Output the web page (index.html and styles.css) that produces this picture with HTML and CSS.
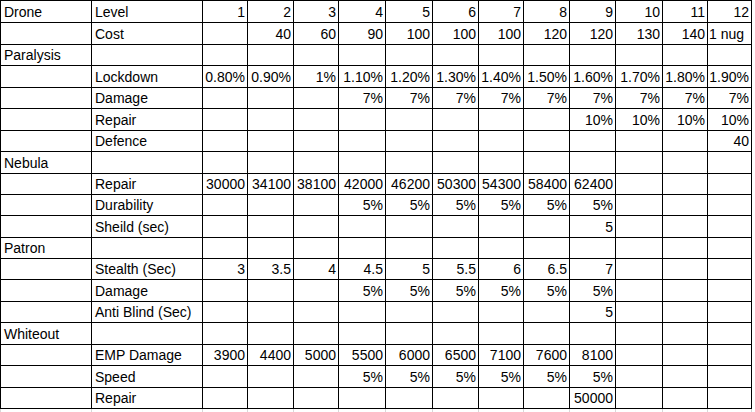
FILE: index.html
```html
<!DOCTYPE html>
<html>
<head>
<meta charset="utf-8">
<link rel="stylesheet" href="styles.css">
</head>
<body>
<div class="sheet">
  <div class="row h22"><div class="c">Drone</div><div class="c">Level</div><div class="c n">1</div><div class="c n">2</div><div class="c n">3</div><div class="c n">4</div><div class="c n">5</div><div class="c n">6</div><div class="c n">7</div><div class="c n">8</div><div class="c n">9</div><div class="c n">10</div><div class="c n">11</div><div class="c n">12</div></div>
  <div class="row h22"><div class="c"></div><div class="c">Cost</div><div class="c n"></div><div class="c n">40</div><div class="c n">60</div><div class="c n">90</div><div class="c n">100</div><div class="c n">100</div><div class="c n">100</div><div class="c n">120</div><div class="c n">120</div><div class="c n">130</div><div class="c n">140</div><div class="c l">1 nug</div></div>
  <div class="row h21"><div class="c">Paralysis</div><div class="c"></div><div class="c"></div><div class="c"></div><div class="c"></div><div class="c"></div><div class="c"></div><div class="c"></div><div class="c"></div><div class="c"></div><div class="c"></div><div class="c"></div><div class="c"></div><div class="c"></div></div>
  <div class="row h22"><div class="c"></div><div class="c">Lockdown</div><div class="c n">0.80%</div><div class="c n">0.90%</div><div class="c n">1%</div><div class="c n">1.10%</div><div class="c n">1.20%</div><div class="c n">1.30%</div><div class="c n">1.40%</div><div class="c n">1.50%</div><div class="c n">1.60%</div><div class="c n">1.70%</div><div class="c n">1.80%</div><div class="c n">1.90%</div></div>
  <div class="row h21"><div class="c"></div><div class="c">Damage</div><div class="c n"></div><div class="c n"></div><div class="c n"></div><div class="c n">7%</div><div class="c n">7%</div><div class="c n">7%</div><div class="c n">7%</div><div class="c n">7%</div><div class="c n">7%</div><div class="c n">7%</div><div class="c n">7%</div><div class="c n">7%</div></div>
  <div class="row h22"><div class="c"></div><div class="c">Repair</div><div class="c n"></div><div class="c n"></div><div class="c n"></div><div class="c n"></div><div class="c n"></div><div class="c n"></div><div class="c n"></div><div class="c n"></div><div class="c n">10%</div><div class="c n">10%</div><div class="c n">10%</div><div class="c n">10%</div></div>
  <div class="row h21"><div class="c"></div><div class="c">Defence</div><div class="c n"></div><div class="c n"></div><div class="c n"></div><div class="c n"></div><div class="c n"></div><div class="c n"></div><div class="c n"></div><div class="c n"></div><div class="c n"></div><div class="c n"></div><div class="c n"></div><div class="c n">40</div></div>
  <div class="row h22"><div class="c">Nebula</div><div class="c"></div><div class="c"></div><div class="c"></div><div class="c"></div><div class="c"></div><div class="c"></div><div class="c"></div><div class="c"></div><div class="c"></div><div class="c"></div><div class="c"></div><div class="c"></div><div class="c"></div></div>
  <div class="row h21"><div class="c"></div><div class="c">Repair</div><div class="c n">30000</div><div class="c n">34100</div><div class="c n">38100</div><div class="c n">42000</div><div class="c n">46200</div><div class="c n">50300</div><div class="c n">54300</div><div class="c n">58400</div><div class="c n">62400</div><div class="c n"></div><div class="c n"></div><div class="c n"></div></div>
  <div class="row h21"><div class="c"></div><div class="c">Durability</div><div class="c n"></div><div class="c n"></div><div class="c n"></div><div class="c n">5%</div><div class="c n">5%</div><div class="c n">5%</div><div class="c n">5%</div><div class="c n">5%</div><div class="c n">5%</div><div class="c n"></div><div class="c n"></div><div class="c n"></div></div>
  <div class="row h22"><div class="c"></div><div class="c">Sheild (sec)</div><div class="c n"></div><div class="c n"></div><div class="c n"></div><div class="c n"></div><div class="c n"></div><div class="c n"></div><div class="c n"></div><div class="c n"></div><div class="c n">5</div><div class="c n"></div><div class="c n"></div><div class="c n"></div></div>
  <div class="row h21"><div class="c">Patron</div><div class="c"></div><div class="c"></div><div class="c"></div><div class="c"></div><div class="c"></div><div class="c"></div><div class="c"></div><div class="c"></div><div class="c"></div><div class="c"></div><div class="c"></div><div class="c"></div><div class="c"></div></div>
  <div class="row h21"><div class="c"></div><div class="c">Stealth (Sec)</div><div class="c n">3</div><div class="c n">3.5</div><div class="c n">4</div><div class="c n">4.5</div><div class="c n">5</div><div class="c n">5.5</div><div class="c n">6</div><div class="c n">6.5</div><div class="c n">7</div><div class="c n"></div><div class="c n"></div><div class="c n"></div></div>
  <div class="row h22"><div class="c"></div><div class="c">Damage</div><div class="c n"></div><div class="c n"></div><div class="c n"></div><div class="c n">5%</div><div class="c n">5%</div><div class="c n">5%</div><div class="c n">5%</div><div class="c n">5%</div><div class="c n">5%</div><div class="c n"></div><div class="c n"></div><div class="c n"></div></div>
  <div class="row h21"><div class="c"></div><div class="c">Anti Blind (Sec)</div><div class="c n"></div><div class="c n"></div><div class="c n"></div><div class="c n"></div><div class="c n"></div><div class="c n"></div><div class="c n"></div><div class="c n"></div><div class="c n">5</div><div class="c n"></div><div class="c n"></div><div class="c n"></div></div>
  <div class="row h22"><div class="c">Whiteout</div><div class="c"></div><div class="c"></div><div class="c"></div><div class="c"></div><div class="c"></div><div class="c"></div><div class="c"></div><div class="c"></div><div class="c"></div><div class="c"></div><div class="c"></div><div class="c"></div><div class="c"></div></div>
  <div class="row h21"><div class="c"></div><div class="c">EMP Damage</div><div class="c n">3900</div><div class="c n">4400</div><div class="c n">5000</div><div class="c n">5500</div><div class="c n">6000</div><div class="c n">6500</div><div class="c n">7100</div><div class="c n">7600</div><div class="c n">8100</div><div class="c n"></div><div class="c n"></div><div class="c n"></div></div>
  <div class="row h22"><div class="c"></div><div class="c">Speed</div><div class="c n"></div><div class="c n"></div><div class="c n"></div><div class="c n">5%</div><div class="c n">5%</div><div class="c n">5%</div><div class="c n">5%</div><div class="c n">5%</div><div class="c n">5%</div><div class="c n"></div><div class="c n"></div><div class="c n"></div></div>
  <div class="row h21"><div class="c"></div><div class="c">Repair</div><div class="c n"></div><div class="c n"></div><div class="c n"></div><div class="c n"></div><div class="c n"></div><div class="c n"></div><div class="c n"></div><div class="c n"></div><div class="c n">50000</div><div class="c n"></div><div class="c n"></div><div class="c n"></div></div>
</div>
<div class="rest">
  <div class="g"></div><div class="g"></div><div class="g"></div><div class="g"></div><div class="g"></div><div class="g"></div><div class="g"></div><div class="g"></div><div class="g"></div><div class="g"></div><div class="g"></div><div class="g"></div><div class="g"></div><div class="g"></div>
</div>
</body>
</html>
```
FILE: styles.css
```css
html, body {
  margin: 0;
  padding: 0;
  background: #ffffff;
  overflow: hidden;
}
body {
  width: 755px;
  height: 412px;
  font-family: "Liberation Sans", Arial, sans-serif;
  font-size: 14px;
  color: #000000;
}
.sheet {
  display: flex;
  flex-direction: column;
  width: 751px;
  border-left: 1px solid #000;
  border-top: 1px solid #000;
}
.row, .rest {
  display: grid;
  grid-template-columns: 91px 111px 45px 46px 45px 47px 47px 46px 45px 46px 46px 47px 45px 44px;
}
.h22 { height: 22px; }
.h21 { height: 21px; }
.c {
  box-sizing: border-box;
  border-right: 1px solid #000;
  border-bottom: 1px solid #000;
  display: flex;
  align-items: flex-end;
  justify-content: flex-start;
  padding: 0 2px 2px 3px;
  line-height: 15px;
  white-space: nowrap;
  overflow: hidden;
}
.n {
  justify-content: flex-end;
  padding-left: 0;
  padding-right: 2px;
}
.l {
  padding-left: 1px;
}
.rest {
  width: 751px;
  height: 10px;
  border-left: 1px solid #d8d8d8;
}
.g {
  box-sizing: border-box;
  border-right: 1px solid #d8d8d8;
}
```
